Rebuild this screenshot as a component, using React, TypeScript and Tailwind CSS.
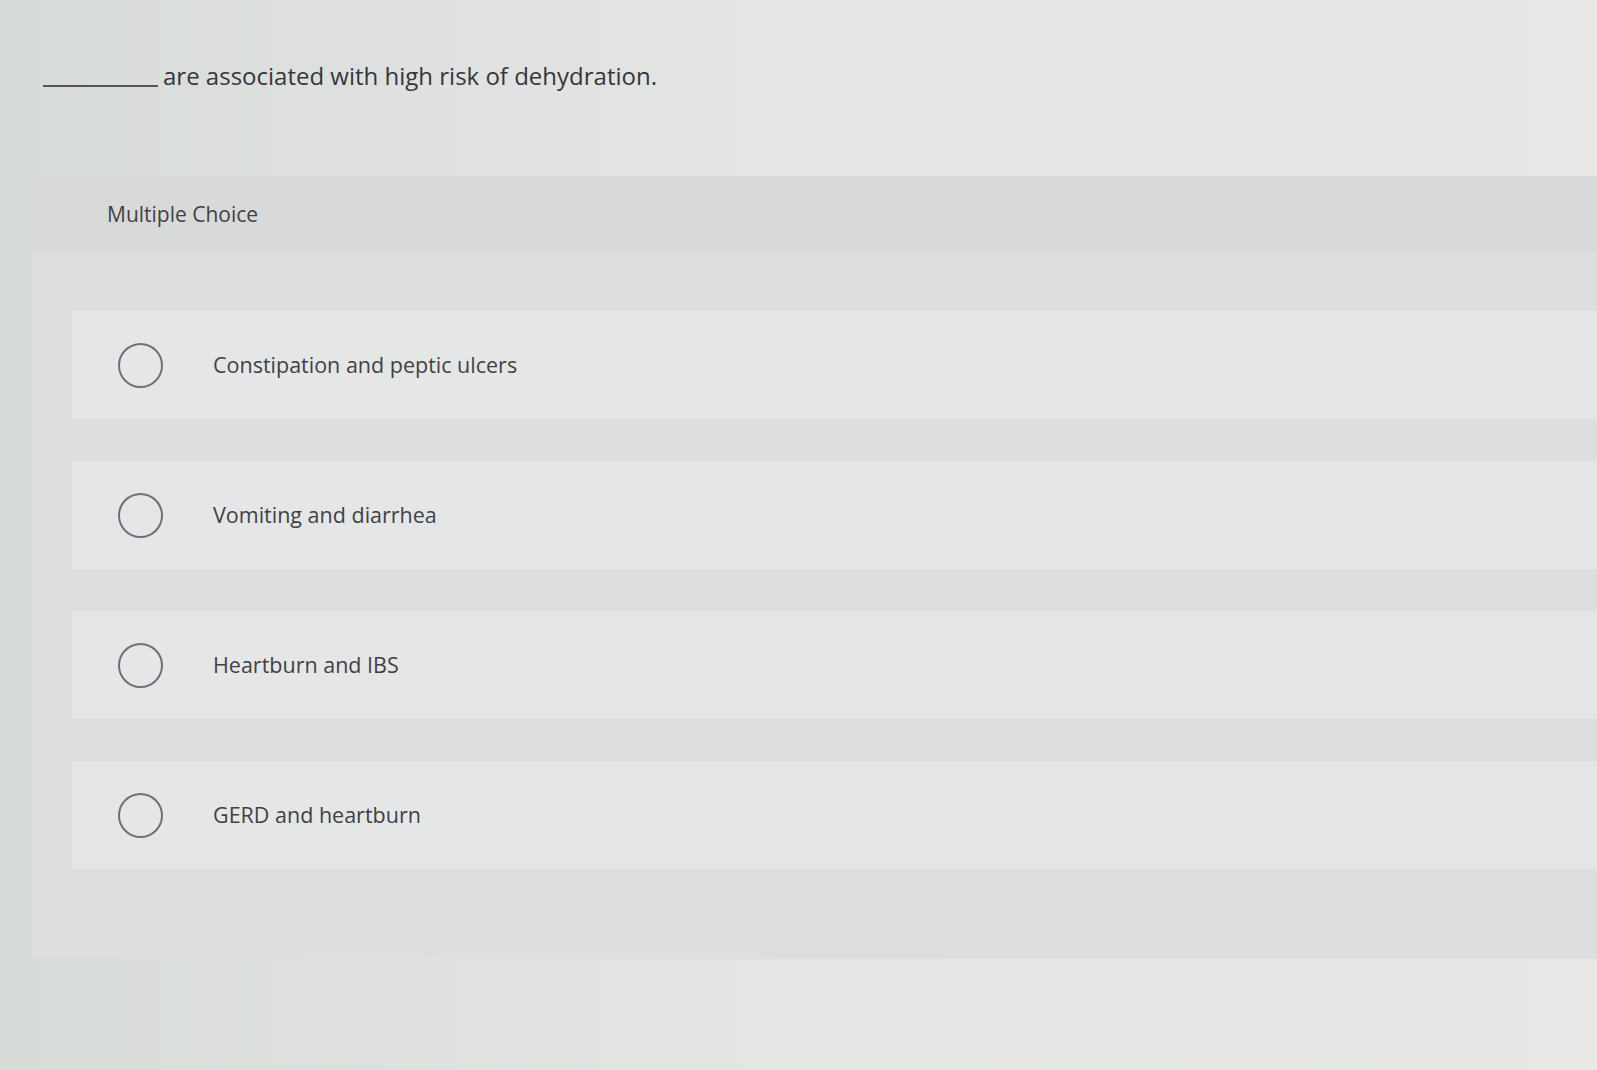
const options = [
  'Constipation and peptic ulcers',
  'Vomiting and diarrhea',
  'Heartburn and IBS',
  'GERD and heartburn',
];

const font = { fontFamily: '"Open Sans", Lato, "Liberation Sans", sans-serif' };

function Radio() {
  return <span className="block w-[45px] h-[45px] rounded-full border-2 border-[#6e717a] shrink-0"></span>;
}

export default function App() {
  return (
    <div
      className="w-[1597px] h-[1070px] overflow-hidden bg-linear-to-r from-[#d8dcd9] via-[#e4e6e4] to-[#e8e9e7] text-[#36363d]"
      style={font}
    >
      <div className="h-[176px] pl-[43px] pt-[60px]">
        <div className="flex items-end">
          <span className="block w-[115px] border-b-2 border-[#55575d] mb-[4px]"></span>
          <span className="ml-[5px] text-[24px] leading-[31px]">
            are associated with high risk of dehydration.
          </span>
        </div>
      </div>

      <div className="ml-[32px] bg-[#dddfde] pb-[90px]">
        <div className="h-[77px] bg-[#d8dad9] pl-[75px] flex items-center">
          <span className="text-[21px] text-[#414148]">Multiple Choice</span>
        </div>
        <div className="pt-[58px] flex flex-col gap-[42px]">
          {options.map((o) => (
            <div key={o} className="ml-[40px] h-[108px] bg-[#e5e7e6] flex items-center pl-[46px]">
              <Radio />
              <span className="ml-[50px] text-[21.5px] text-[#414147]">{o}</span>
            </div>
          ))}
        </div>
      </div>
    </div>
  );
}
